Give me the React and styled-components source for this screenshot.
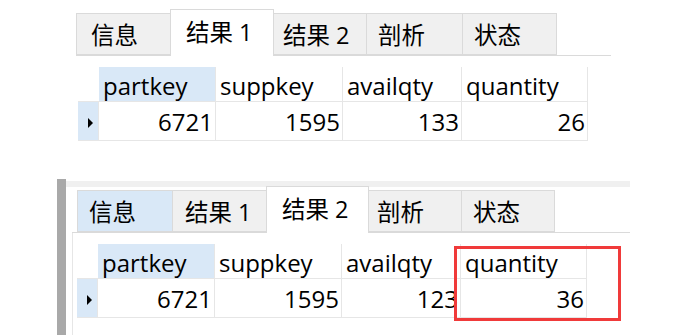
import React from 'react'
import styled, { createGlobalStyle } from 'styled-components'

const GlobalStyle = createGlobalStyle`
  html, body {
    margin: 0;
    padding: 0;
    background: #fff;
  }
  body {
    font-family: 'Open Sans', 'Noto Sans CJK SC', sans-serif;
    color: #000;
  }
`

const cols = '21px 117px 127px 119px 126px'

const tabsTop = [
  { label: '信息', w: 95, pl: 14 },
  { label: '结果 1', w: 104, pl: 15, active: true },
  { label: '结果 2', w: 94, pl: 9 },
  { label: '剖析', w: 97, pl: 11 },
  { label: '状态', w: 95, pl: 11 },
]

const tabsBottom = [
  { label: '信息', w: 96, pl: 11, hover: true },
  { label: '结果 1', w: 95, pl: 12 },
  { label: '结果 2', w: 103, pl: 15, active: true },
  { label: '剖析', w: 94, pl: 8 },
  { label: '状态', w: 94, pl: 11 },
]

const TabRow = ({ tabs }) => (
  <TabBar>
    {tabs.map((t) => (
      <Tab key={t.label} $w={t.w} $pl={t.pl} $active={t.active} $hover={t.hover}>
        {t.label}
      </Tab>
    ))}
  </TabBar>
)

const ResultGrid = ({ values }) => (
  <Grid>
    <HeadCell $corner />
    <HeadCell $selected>partkey</HeadCell>
    <HeadCell>suppkey</HeadCell>
    <HeadCell>availqty</HeadCell>
    <HeadCell>quantity</HeadCell>
    <Indicator>
      <Arrow />
    </Indicator>
    {values.map((v, i) => (
      <Cell key={i}>{v}</Cell>
    ))}
  </Grid>
)

const App = () => (
  <Page>
    <GlobalStyle />
    <TopPanel>
      <TabRow tabs={tabsTop} />
      <GridWrap>
        <ResultGrid values={[6721, 1595, 133, 26]} />
      </GridWrap>
    </TopPanel>

    <BottomPanel>
      <SideBar />
      <Inner>
        <Band />
        <TabArea>
          <TabRow tabs={tabsBottom} />
        </TabArea>
        <Body>
          <ResultGrid values={[6721, 1595, 123, 36]} />
        </Body>
      </Inner>
      <Highlight />
    </BottomPanel>
  </Page>
)

const Page = styled.div`
  width: 691px;
  height: 335px;
  overflow: hidden;
  padding-top: 10px;
  box-sizing: border-box;
`
const TopPanel = styled.div`
  margin-left: 76px;
  width: 535px;
`
const TabBar = styled.div`
  display: flex;
  align-items: flex-end;
  height: 45px;
  border-bottom: 1px solid #dadada;
`
const Tab = styled.div`
  box-sizing: border-box;
  width: ${(p) => p.$w}px;
  height: ${(p) => (p.$active ? 47 : 42)}px;
  margin-bottom: ${(p) => (p.$active ? -1 : 0)}px;
  padding-left: ${(p) => p.$pl}px;
  display: flex;
  align-items: center;
  padding-bottom: ${(p) => (p.$active ? 4 : 0)}px;
  font-size: 23.5px;
  font-family: 'Open Sans', 'Noto Sans CJK SC', sans-serif;
  background: ${(p) => (p.$active ? '#fff' : p.$hover ? '#d9e8f7' : '#f0f0f0')};
  border: 1px solid #dadada;
  border-bottom: ${(p) => (p.$active ? 'none' : '1px solid #dadada')};
  margin-right: -1px;
  position: relative;
  z-index: ${(p) => (p.$active ? 1 : 0)};
`
const GridWrap = styled.div`
  padding: 11px 0 0 2px;
`
const Grid = styled.div`
  display: grid;
  grid-template-columns: ${cols};
  grid-template-rows: 35px 39px;
  font-size: 24px;
`
const HeadCell = styled.div`
  box-sizing: border-box;
  display: flex;
  align-items: center;
  padding: 2px 0 0 4px;
  background: ${(p) => (p.$selected ? '#d9e8f7' : '#fff')};
  border-right: ${(p) => (p.$corner ? 'none' : '1px solid #e6e6e6')};
  border-bottom: 1px solid #e6e6e6;
  white-space: nowrap;
`
const Indicator = styled.div`
  background: #d9e8f7;
  border-bottom: 1px solid #e6e6e6;
  border-right: 1px solid #e6e6e6;
  display: flex;
  align-items: center;
  justify-content: center;
  padding-top: 3px;
`
const Arrow = styled.span`
  width: 0;
  height: 0;
  border-top: 5px solid transparent;
  border-bottom: 5px solid transparent;
  border-left: 5px solid #000;
  margin-left: 5px;
`
const Cell = styled.div`
  box-sizing: border-box;
  display: flex;
  align-items: center;
  justify-content: flex-end;
  padding-right: 2px;
  border-right: 1px solid #e6e6e6;
  border-bottom: 1px solid #e6e6e6;
  white-space: nowrap;
  overflow: hidden;
`
const BottomPanel = styled.div`
  position: relative;
  display: flex;
  margin: 38px 0 0 57px;
  height: 160px;
`
const SideBar = styled.div`
  width: 9px;
  background: #a9a9a9;
`
const Inner = styled.div`
  width: 564px;
  padding-top: 2px;
`
const Band = styled.div`
  height: 6px;
  background: #f0f0f0;
`
const TabArea = styled.div`
  margin-left: 6px;
  padding-left: 5px;
  border-bottom: 1px solid #dadada;
  & > div {
    border-bottom: none;
  }
`
const Body = styled.div`
  margin-left: 6px;
  height: 110px;
  border-left: 1px solid #e6e6e6;
  padding: 11px 0 0 4px;
`
const Highlight = styled.div`
  position: absolute;
  left: 397px;
  top: 67px;
  width: 167px;
  height: 75px;
  box-sizing: border-box;
  border: 3px solid #f03a3a;
`

export default App
